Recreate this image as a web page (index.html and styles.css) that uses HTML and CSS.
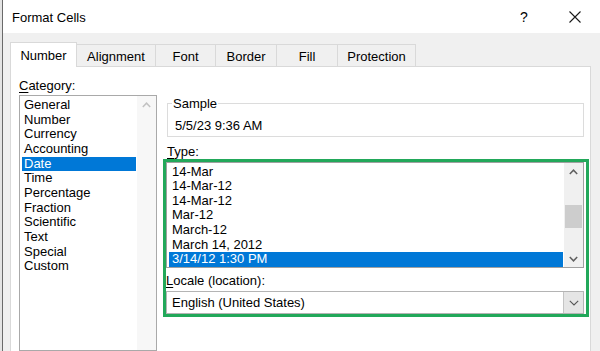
FILE: index.html
```html
<!DOCTYPE html>
<html>
<head>
<meta charset="utf-8">
<link rel="stylesheet" href="styles.css">
</head>
<body>
<div class="screen">
  <div class="edge"></div>
  <div class="dialog">
    <div class="titlebar">
      <span class="title">Format Cells</span>
      <span class="tbtn help">?</span>
      <span class="tbtn close">
        <svg width="12" height="12" viewBox="0 0 12 12"><path d="M0.5 0.5 L11.5 11.5 M11.5 0.5 L0.5 11.5" stroke="#1a1a1a" stroke-width="1.1" fill="none"/></svg>
      </span>
    </div>
    <div class="body">
      <div class="tabs">
        <div class="tab active t-number">Number</div>
        <div class="tab t-align">Alignment</div>
        <div class="tab t-font">Font</div>
        <div class="tab t-border">Border</div>
        <div class="tab t-fill">Fill</div>
        <div class="tab t-prot">Protection</div>
      </div>
      <div class="panel">
        <div class="leftcol">
          <div class="label"><u>C</u>ategory:</div>
          <div class="catlist">
            <div class="items">
              <div class="item">General</div>
              <div class="item">Number</div>
              <div class="item">Currency</div>
              <div class="item">Accounting</div>
              <div class="item sel">Date</div>
              <div class="item">Time</div>
              <div class="item">Percentage</div>
              <div class="item">Fraction</div>
              <div class="item">Scientific</div>
              <div class="item">Text</div>
              <div class="item">Special</div>
              <div class="item">Custom</div>
            </div>
            <div class="vscroll disabled">
              <div class="sbtn">
                <svg width="9" height="6" viewBox="0 0 9 6"><polyline points="0.8,5 4.5,1.2 8.2,5" stroke="#c2c2c2" stroke-width="1.5" fill="none"/></svg>
              </div>
            </div>
          </div>
        </div>
        <div class="rightcol">
          <div class="sample">
            <div class="legend">Sample</div>
            <div class="sample-val">5/5/23 9:36 AM</div>
          </div>
          <div class="label type-label"><u>T</u>ype:</div>
          <div class="highlight">
            <div class="typelist">
              <div class="items">
                <div class="item">14-Mar</div>
                <div class="item">14-Mar-12</div>
                <div class="item">14-Mar-12</div>
                <div class="item">Mar-12</div>
                <div class="item">March-12</div>
                <div class="item">March 14, 2012</div>
                <div class="item sel">3/14/12 1:30 PM</div>
              </div>
              <div class="vscroll">
                <div class="sbtn">
                  <svg width="9" height="6" viewBox="0 0 9 6"><polyline points="0.8,5 4.5,1.2 8.2,5" stroke="#606060" stroke-width="1.5" fill="none"/></svg>
                </div>
                <div class="track"><div class="thumb"></div></div>
                <div class="sbtn">
                  <svg width="9" height="6" viewBox="0 0 9 6"><polyline points="0.8,1 4.5,4.8 8.2,1" stroke="#606060" stroke-width="1.5" fill="none"/></svg>
                </div>
              </div>
            </div>
            <div class="label locale-label"><u>L</u>ocale (location):</div>
            <div class="combo">
              <div class="combo-text">English (United States)</div>
              <div class="combo-btn">
                <svg width="10" height="6" viewBox="0 0 10 6"><polyline points="0.8,0.8 5,5 9.2,0.8" stroke="#555" stroke-width="1.1" fill="none"/></svg>
              </div>
            </div>
          </div>
        </div>
      </div>
    </div>
  </div>
</div>
</body>
</html>
```
FILE: styles.css
```css
html, body {
  margin: 0;
  padding: 0;
}
body {
  width: 600px;
  height: 351px;
  overflow: hidden;
  font-family: "Liberation Sans", Arial, sans-serif;
  font-size: 13px;
  color: #000;
}
.screen {
  display: flex;
  width: 600px;
  height: 351px;
}
.edge {
  width: 2px;
  background: #e4e4e4;
  border-right: 1px solid #6a6a6a;
  flex: none;
}
.dialog {
  flex: 1;
  display: flex;
  flex-direction: column;
  background: #f0f0f0;
  min-width: 0;
}
.titlebar {
  height: 33px;
  background: #fff;
  display: flex;
  align-items: center;
  padding-left: 9px;
  flex: none;
}
.title {
  font-size: 13px;
  flex: 1;
  padding-top: 1px;
}
.tbtn {
  width: 46px;
  height: 33px;
  display: flex;
  align-items: center;
  justify-content: center;
}
.help {
  font-size: 14px;
  margin-right: 5px;
  padding-top: 1px;
}
.close {
  margin-right: 2px;
}
.body {
  flex: 1;
  display: flex;
  flex-direction: column;
  padding: 9px 9px 0 7px;
  min-height: 0;
}
.tabs {
  display: flex;
  align-items: flex-end;
  height: 24px;
  position: relative;
  z-index: 1;
  flex: none;
}
.tab {
  border: 1px solid #d9d9d9;
  border-bottom: none;
  margin-left: -1px;
  display: flex;
  align-items: center;
  justify-content: center;
  background: #f0f0f0;
  box-sizing: border-box;
  height: 22px;
  padding-top: 1px;
}
.tab.active {
  height: 25px;
  background: #fff;
  margin-left: 0;
  margin-bottom: -1px;
  padding-top: 0;
}
.t-number { width: 67px; }
.t-align { width: 80px; }
.t-font { width: 61px; }
.t-border { width: 62px; }
.t-fill { width: 62px; }
.t-prot { width: 79px; }

.panel {
  flex: 1;
  background: #fff;
  border: 1px solid #d9d9d9;
  border-bottom: none;
  display: flex;
  gap: 10px;
  padding: 11px 6px 0 8px;
  min-height: 0;
}
.label {
  height: 15px;
  line-height: 15px;
}
.label u {
  text-underline-offset: 2px;
}
.leftcol {
  width: 138px;
  flex: none;
  display: flex;
  flex-direction: column;
}
.catlist {
  margin-top: 2px;
  height: 270px;
  border: 1px solid #a9a9a9;
  display: flex;
  background: #fff;
}
.items {
  flex: 1;
  padding: 2px 1px 0 2px;
  min-width: 0;
}
.item {
  height: 14.67px;
  line-height: 14.67px;
  padding-left: 2px;
  white-space: nowrap;
}
.item.sel {
  background: #0078d7;
  color: #fff;
}
.vscroll {
  width: 19px;
  flex: none;
  background: #f0f0f0;
  display: flex;
  flex-direction: column;
}
.vscroll.disabled {
  background: #f7f7f7;
}
.sbtn {
  height: 17px;
  display: flex;
  align-items: center;
  justify-content: center;
  flex: none;
}
.track {
  flex: 1;
  padding-top: 25px;
}
.thumb {
  width: 17px;
  height: 23px;
  margin-left: 1px;
  background: #cdcdcd;
}
.rightcol {
  flex: 1;
  display: flex;
  flex-direction: column;
  min-width: 0;
}
.sample {
  margin-top: 25px;
  padding: 0 0 3px 0;
  border: 1px solid #dcdcdc;
}
.legend {
  display: block;
  width: fit-content;
  line-height: 15px;
  margin: -8px 0 0 4px;
  padding: 0 1px;
  background: #fff;
}
.sample-val {
  line-height: 15px;
  margin-top: 7px;
  padding-left: 7px;
}
.type-label {
  margin-top: 7px;
}
.highlight {
  margin: 0 -5px 0 -4px;
  border: 3px solid #22a85a;
  padding: 0 2px 0 0;
  display: flex;
  flex-direction: column;
}
.typelist {
  height: 106px;
  box-sizing: border-box;
  border: 1px solid #a0a0a0;
  display: flex;
  background: #fff;
}
.typelist .items {
  padding: 1.5px 1px 0 2px;
}
.typelist .item {
  padding-left: 3px;
}
.locale-label {
  margin-top: 5px;
}
.combo {
  margin-top: 3px;
  height: 23px;
  box-sizing: border-box;
  border: 1px solid #b4b4b4;
  display: flex;
  background: #fff;
}
.combo-text {
  flex: 1;
  line-height: 21px;
  padding-left: 5px;
}
.combo-btn {
  width: 19px;
  background: #e5e5e5;
  border-left: 1px solid #c4c4c4;
  display: flex;
  align-items: center;
  justify-content: center;
}
```
